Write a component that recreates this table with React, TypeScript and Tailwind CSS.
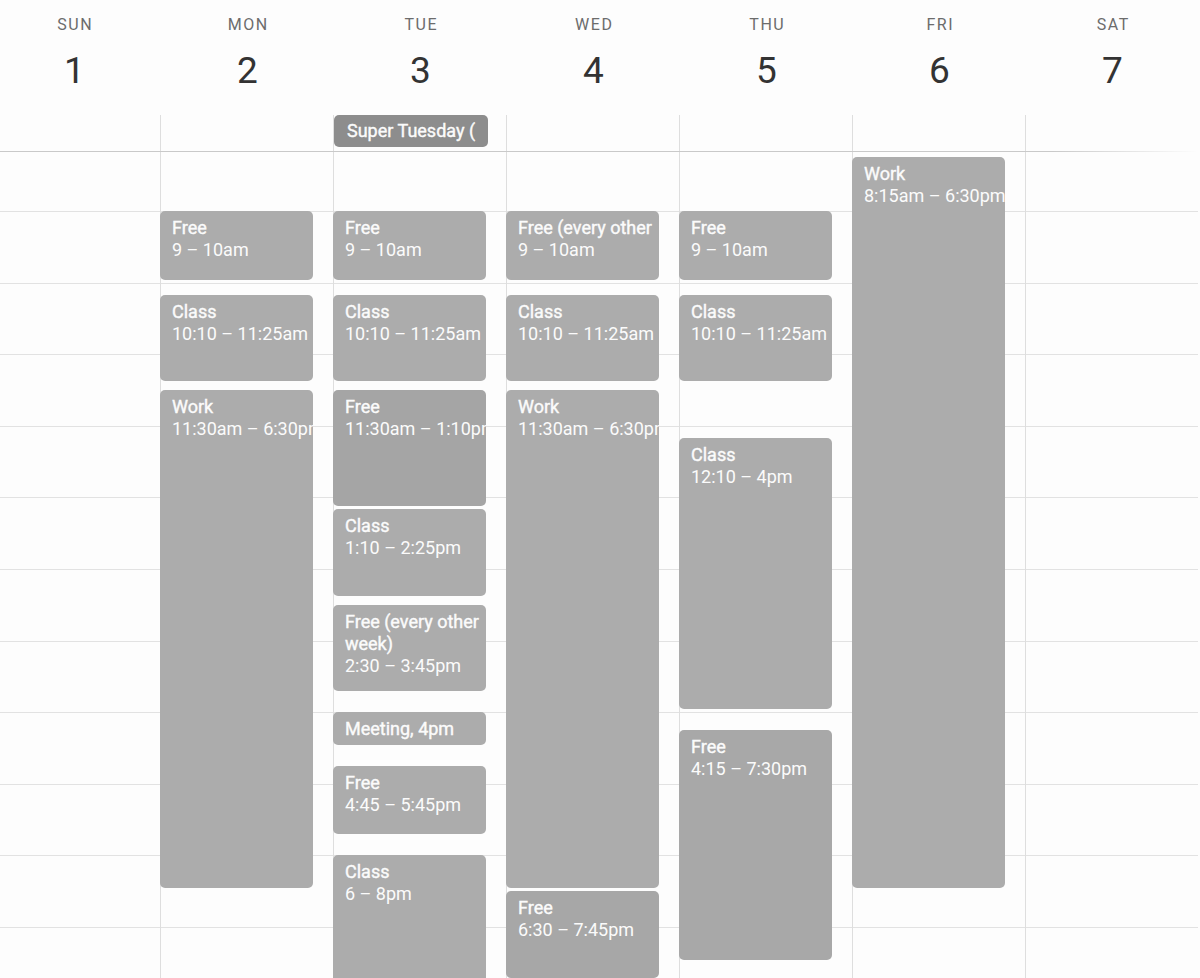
type CalEvent = {
  title: string;
  time?: string;
  start: number;
  end: number;
  bg?: string;
  inline?: boolean;
};

type Day = {
  name: string;
  num: number;
  allDay?: string;
  events: CalEvent[];
};

const HOUR = 71.6;
// grid top sits a bit after 8am; 9am line is 59px down
const topFor = (h: number) => 59 + (h - 9) * HOUR;

const days: Day[] = [
  { name: "SUN", num: 1, events: [] },
  {
    name: "MON",
    num: 2,
    events: [
      { title: "Free", time: "9 – 10am", start: 9, end: 10 },
      { title: "Class", time: "10:10 – 11:25am", start: 10 + 10 / 60, end: 11 + 25 / 60 },
      { title: "Work", time: "11:30am – 6:30pm", start: 11.5, end: 18.5 },
    ],
  },
  {
    name: "TUE",
    num: 3,
    allDay: "Super Tuesday (",
    events: [
      { title: "Free", time: "9 – 10am", start: 9, end: 10 },
      { title: "Class", time: "10:10 – 11:25am", start: 10 + 10 / 60, end: 11 + 25 / 60 },
      { title: "Free", time: "11:30am – 1:10pm", start: 11.5, end: 13 + 10 / 60, bg: "bg-[#a5a5a5]" },
      { title: "Class", time: "1:10 – 2:25pm", start: 13 + 10 / 60, end: 14 + 25 / 60 },
      { title: "Free (every other week)", time: "2:30 – 3:45pm", start: 14.5, end: 15.75 },
      { title: "Meeting, 4pm", start: 16, end: 16.5, inline: true },
      { title: "Free", time: "4:45 – 5:45pm", start: 16.75, end: 17.75 },
      { title: "Class", time: "6 – 8pm", start: 18, end: 20 },
    ],
  },
  {
    name: "WED",
    num: 4,
    events: [
      { title: "Free (every other", time: "9 – 10am", start: 9, end: 10 },
      { title: "Class", time: "10:10 – 11:25am", start: 10 + 10 / 60, end: 11 + 25 / 60 },
      { title: "Work", time: "11:30am – 6:30pm", start: 11.5, end: 18.5 },
      { title: "Free", time: "6:30 – 7:45pm", start: 18.5, end: 19.75, bg: "bg-[#a7a7a7]" },
    ],
  },
  {
    name: "THU",
    num: 5,
    events: [
      { title: "Free", time: "9 – 10am", start: 9, end: 10 },
      { title: "Class", time: "10:10 – 11:25am", start: 10 + 10 / 60, end: 11 + 25 / 60 },
      { title: "Class", time: "12:10 – 4pm", start: 12 + 10 / 60, end: 16 },
      { title: "Free", time: "4:15 – 7:30pm", start: 16.25, end: 19.5, bg: "bg-[#a8a8a8]" },
    ],
  },
  {
    name: "FRI",
    num: 6,
    events: [{ title: "Work", time: "8:15am – 6:30pm", start: 8.25, end: 18.5 }],
  },
  { name: "SAT", num: 7, events: [] },
];

const EventBox = ({ ev }: { ev: CalEvent }) => (
  <div
    className={`absolute left-[-1px] w-[153px] overflow-hidden rounded-[5px] ${
      ev.bg ?? "bg-[#acacac]"
    } pl-[12px] pt-[6px] text-[18px] leading-[22px] text-[#fbfbfb]`}
    style={{ top: topFor(ev.start), height: (ev.end - ev.start) * HOUR - 3 }}
  >
    <div
      className={`font-normal [-webkit-text-stroke:0.4px_#fbfbfb] ${
        ev.inline ? "whitespace-nowrap" : "pr-1"
      }`}
    >
      {ev.title}
    </div>
    {ev.time && <div className="whitespace-nowrap">{ev.time}</div>}
  </div>
);

export default function App() {
  return (
    <div className="w-[1200px] h-[978px] overflow-hidden bg-[#fdfdfd] font-['Roboto','Noto_Sans',sans-serif]">
      <div className="-ml-[13px] w-[1211px]">
        {/* header */}
        <div className="grid grid-cols-7 h-[115px]">
          {days.map((d) => (
            <div key={d.name} className="flex flex-col items-center pt-[17px] pl-[2px]">
              <div className="text-[16px] leading-[16px] tracking-[1.5px] pl-[1.5px] text-[#6c6c6c]">
                {d.name}
              </div>
              <div className="mt-[19px] text-[37px] leading-[37px] text-[#333333]">
                {d.num}
              </div>
            </div>
          ))}
        </div>

        {/* all-day row */}
        <div className="grid grid-cols-7 h-[36px]">
          {days.map((d, i) => (
            <div
              key={d.name}
              className={`relative ${i > 0 ? "border-l border-[#dedede]" : ""}`}
            >
              {d.allDay && (
                <div className="absolute left-0 top-0 w-[154px] h-[32px] rounded-[5px] bg-[#8d8d8d] pl-[13px] text-[18px] leading-[32px] [-webkit-text-stroke:0.4px_#fbfbfb] text-[#fbfbfb] whitespace-nowrap overflow-hidden">
                  {d.allDay}
                </div>
              )}
            </div>
          ))}
        </div>
        <div className="h-px bg-[linear-gradient(to_right,#c9c9c9_88%,#fdfdfd)]" />

        {/* time grid */}
        <div className="relative h-[826px]">
          <div className="absolute inset-0 flex flex-col">
            <div className="h-[60px] shrink-0 border-b border-[#e2e2e2]" />
            {Array.from({ length: 11 }).map((_, i) => (
              <div key={i} className="h-[71.6px] shrink-0 border-b border-[#e2e2e2]" />
            ))}
          </div>
          <div className="relative grid grid-cols-7 h-full">
            {days.map((d, i) => (
              <div
                key={d.name}
                className={`relative ${i > 0 ? "border-l border-[#dedede]" : ""}`}
              >
                {d.events.map((ev, j) => (
                  <EventBox key={j} ev={ev} />
                ))}
              </div>
            ))}
          </div>
        </div>
      </div>
    </div>
  );
}
